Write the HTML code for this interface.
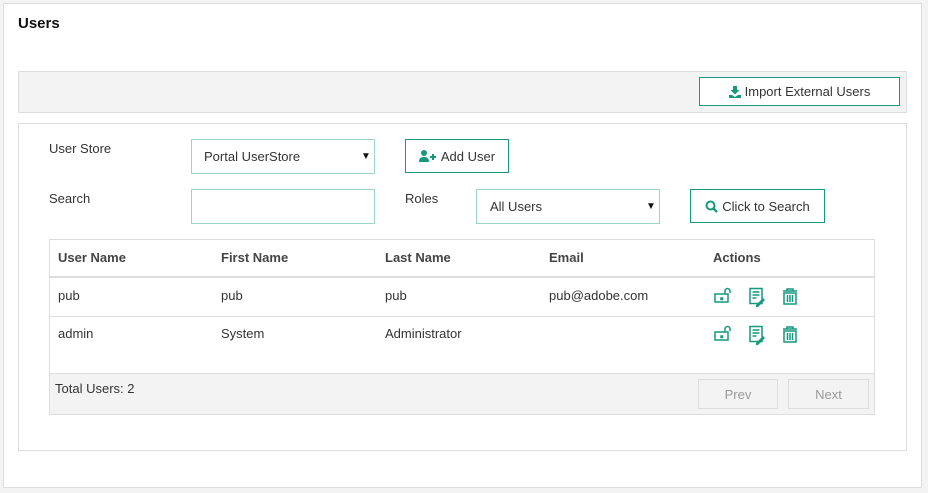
<!DOCTYPE html>
<html><head><style>
body{margin:0;width:928px;height:493px;background:#f3f3f3;font-family:"Liberation Sans",sans-serif;font-size:13px;color:#333;position:relative;overflow:hidden}
.a{position:absolute;box-sizing:border-box}
.btn{border:1px solid #16997f;background:#fff;color:#333;font-size:13px;display:flex;align-items:center;justify-content:center;gap:4px}
.inp{border:1px solid #9bd5c9;background:#fff}
.t{position:absolute;white-space:nowrap}
.ic{position:absolute}
.h{font-weight:bold;color:#444}
</style></head><body>
<div class="a" style="left:3px;top:3px;width:919px;height:485px;background:#fff;border:1px solid #ddd"></div>
<div class="t" style="left:18px;top:15px;font-weight:bold;font-size:15px;color:#111">Users</div>
<div class="a" style="left:18px;top:71px;width:889px;height:42px;background:#f3f3f3;border:1px solid #ddd"></div>
<div class="a btn" style="left:699px;top:77px;width:201px;height:29px"><svg width="12" height="12" viewBox="0 0 12 12"><path d="M4 0h4v4h2.5L6 8.5 1.5 4H4z M0 9h3l3 2 3-2h3v3H0z" fill="#16997f"/></svg>Import External Users</div>
<div class="a" style="left:18px;top:123px;width:889px;height:328px;border:1px solid #ddd;background:#fff"></div>
<div class="t" style="left:49px;top:141px">User Store</div>
<div class="a inp" style="left:191px;top:139px;width:184px;height:35px"></div>
<div class="t" style="left:204px;top:149px">Portal UserStore</div>
<div class="t" style="left:361px;top:151px;font-size:10px;color:#111">▼</div>
<div class="a btn" style="left:405px;top:139px;width:104px;height:34px"><svg width="18" height="12" viewBox="0 0 18 12"><circle cx="5" cy="3" r="3" fill="#16997f"/><path d="M0 12c0-4 2-5 5-5s5 1 5 5z" fill="#16997f"/><path d="M11 7h6M14 4v6" stroke="#16997f" stroke-width="2"/></svg>Add User</div>
<div class="t" style="left:49px;top:191px">Search</div>
<div class="a inp" style="left:191px;top:189px;width:184px;height:35px"></div>
<div class="t" style="left:405px;top:191px">Roles</div>
<div class="a inp" style="left:476px;top:189px;width:184px;height:35px"></div>
<div class="t" style="left:490px;top:199px">All Users</div>
<div class="t" style="left:646px;top:201px;font-size:10px;color:#111">▼</div>
<div class="a btn" style="left:690px;top:189px;width:135px;height:34px"><svg width="13" height="13" viewBox="0 0 13 13"><circle cx="5.5" cy="5.5" r="4" fill="none" stroke="#16997f" stroke-width="2"/><path d="M8.5 8.5l3.5 3.5" stroke="#16997f" stroke-width="2.4"/></svg>Click to Search</div>
<div class="a" style="left:49px;top:239px;width:826px;height:176px;border:1px solid #ddd"></div>
<div class="a" style="left:50px;top:276px;width:824px;height:2px;background:#ddd"></div>
<div class="a" style="left:50px;top:316px;width:824px;height:1px;background:#ddd"></div>
<div class="a" style="left:50px;top:373px;width:824px;height:41px;background:#f3f3f3;border-top:1px solid #ddd"></div>
<div class="t h" style="left:58px;top:250px">User Name</div>
<div class="t h" style="left:221px;top:250px">First Name</div>
<div class="t h" style="left:385px;top:250px">Last Name</div>
<div class="t h" style="left:549px;top:250px">Email</div>
<div class="t h" style="left:713px;top:250px">Actions</div>
<div class="t" style="left:58px;top:288px">pub</div><div class="t" style="left:221px;top:288px">pub</div><div class="t" style="left:385px;top:288px">pub</div><div class="t" style="left:549px;top:288px">pub@adobe.com</div>
<div class="t" style="left:58px;top:326px">admin</div><div class="t" style="left:221px;top:326px">System</div><div class="t" style="left:385px;top:326px">Administrator</div>
<svg class="ic" style="left:714px;top:287px" width="90" height="60" viewBox="0 0 90 60">
<g id="r" fill="none" stroke="#16997f" stroke-width="1.5">
<rect x="1" y="7" width="13" height="8"/><path d="M11 7V4a2.5 2.5 0 0 1 5 0v2"/><rect x="7" y="11" width="1.5" height="1.5" fill="#16997f"/>
<rect x="36" y="1.5" width="12" height="15"/><path d="M38.5 5h7M38.5 8h7M38.5 11h4"/><path d="M42 18l7-7 2 2-7 7h-2z" fill="#16997f" stroke="none"/>
<path d="M69 4h14M73 4V2h6v2M70 6h12v11H70zM73.5 8v7M76 8v7M78.5 8v7"/>
</g>
<use href="#r" y="38"/>
</svg>
<div class="t" style="left:55px;top:381px">Total Users: 2</div>
<div class="a" style="left:698px;top:379px;width:80px;height:30px;border:1px solid #ddd;color:#999;display:flex;align-items:center;justify-content:center">Prev</div>
<div class="a" style="left:788px;top:379px;width:81px;height:30px;border:1px solid #ddd;color:#999;display:flex;align-items:center;justify-content:center">Next</div>
</body></html>
